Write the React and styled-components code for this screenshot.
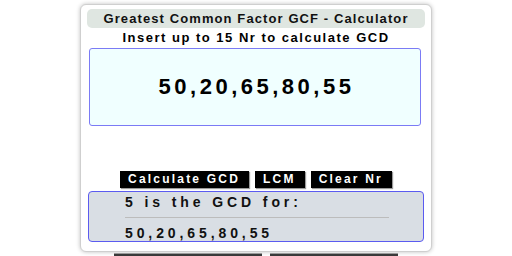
import styled, { createGlobalStyle } from 'styled-components';

const GlobalStyle = createGlobalStyle`
  html, body {
    margin: 0;
    padding: 0;
    background: #fff;
    overflow: hidden;
  }
  body {
    font-family: "Liberation Sans", Arial, sans-serif;
    color: #000;
  }
`;

const numbers = [50, 20, 65, 80, 55];

const gcd = (a, b) => (b === 0 ? a : gcd(b, a % b));

const App = () => {
  const result = numbers.reduce((acc, n) => gcd(acc, n));
  return (
    <Page>
      <GlobalStyle />
      <Card>
        <TitleBar>Greatest Common Factor GCF - Calculator</TitleBar>
        <Subtitle>Insert up to 15 Nr to calculate GCD</Subtitle>
        <NumberBox>{numbers.join(',')}</NumberBox>
        <ButtonRow>
          <Button>Calculate GCD</Button>
          <Button>LCM</Button>
          <Button>Clear Nr</Button>
        </ButtonRow>
        <ResultBox>
          <ResultLine>{result} is the GCD for:</ResultLine>
          <Divider />
          <ResultLine>{numbers.join(',')}</ResultLine>
        </ResultBox>
      </Card>
      <BottomRow>
        <BottomBar $width={148} />
        <BottomBar $width={128} />
      </BottomRow>
    </Page>
  );
};

export default App;

const Page = styled.div`
  display: flex;
  flex-direction: column;
  align-items: center;
  padding-top: 4px;
  width: 512px;
  height: 256px;
  overflow: hidden;
`;

const Card = styled.div`
  width: 352px;
  box-sizing: border-box;
  border: 1px solid #cfcfcf;
  border-radius: 6px;
  box-shadow: 0 0 4px rgba(0, 0, 0, 0.25);
  background: #fff;
  padding: 4px 0 9px;
  display: flex;
  flex-direction: column;
`;

const TitleBar = styled.div`
  margin: 0 6px;
  height: 19px;
  line-height: 19px;
  background: #dfe6e1;
  border-radius: 5px;
  text-align: center;
  font-size: 13px;
  font-weight: bold;
  letter-spacing: 1.1px;
  color: #111;
`;

const Subtitle = styled.div`
  height: 19px;
  line-height: 19px;
  text-align: center;
  font-size: 13px;
  font-weight: bold;
  letter-spacing: 1.5px;
`;

const NumberBox = styled.div`
  margin: 1px 10px 0 8px;
  height: 78px;
  box-sizing: border-box;
  background: #f0ffff;
  border: 1px solid #7b7bf5;
  border-radius: 3px;
  display: flex;
  align-items: center;
  justify-content: center;
  font-size: 22px;
  font-weight: bold;
  letter-spacing: 3.5px;
  padding-left: 3px;
`;

const ButtonRow = styled.div`
  display: flex;
  justify-content: center;
  gap: 6px;
  margin-top: 45px;
`;

const Button = styled.button`
  height: 17px;
  padding: 0 9px 0 8px;
  border: none;
  background: #000;
  color: #fff;
  font-family: "Liberation Sans", Arial, sans-serif;
  font-size: 12px;
  font-weight: bold;
  letter-spacing: 2.2px;
  line-height: 17px;
  box-shadow: 1px 1px 1px #9a9a9a;
  cursor: pointer;
`;

const ResultBox = styled.div`
  margin: 3px 7px 0;
  box-sizing: border-box;
  height: 51px;
  background: #d9dee4;
  border: 1px solid #5b5bf0;
  border-radius: 4px;
  padding: 2px 0 0 36px;
  overflow: hidden;
`;

const ResultLine = styled.div`
  height: 16px;
  line-height: 16px;
  font-size: 14px;
  font-weight: bold;
  letter-spacing: 3.9px;
  color: #111;
`;

const Divider = styled.div`
  width: 264px;
  height: 1px;
  background: #bcbcbc;
  margin: 7px 0;
`;

const BottomRow = styled.div`
  display: flex;
  gap: 8px;
  margin-top: 1px;
`;

const BottomBar = styled.div`
  width: ${p => p.$width}px;
  height: 20px;
  background: #3a3a3a;
  border-top: 1px solid #9a9a9a;
`;
